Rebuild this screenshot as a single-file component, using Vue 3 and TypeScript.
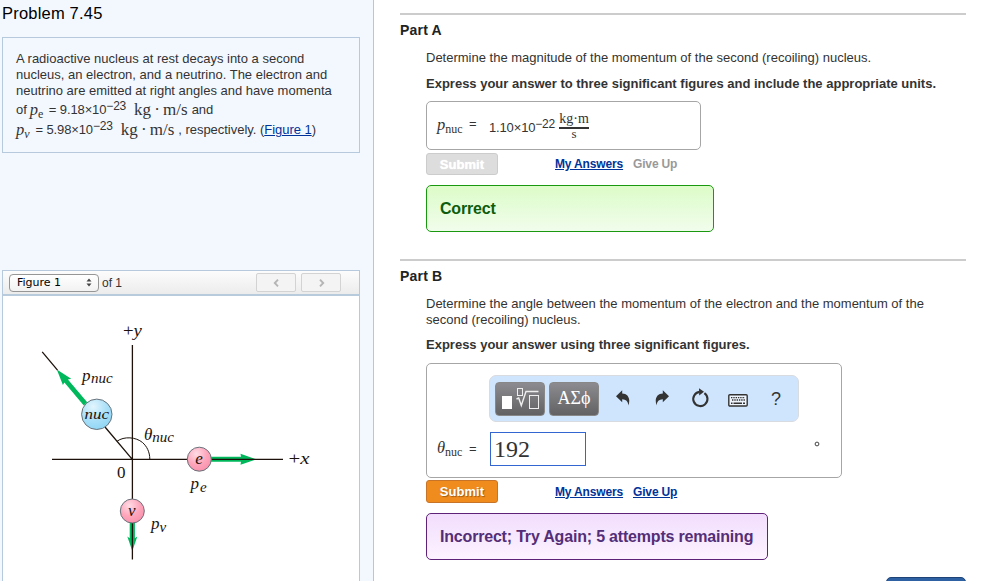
<script setup lang="ts">
import { ref } from 'vue'

const figure = ref('Figure 1')
const answer = ref('192')
</script>

<template>
  <div class="page">
    <aside class="left">
      <h1 class="title">Problem 7.45</h1>
      <section class="problem">
        <div class="line l1">A radioactive nucleus at rest decays into a second</div>
        <div class="line l2">nucleus, an electron, and a neutrino. The electron and</div>
        <div class="line l3">neutrino are emitted at right angles and have momenta</div>
        <div class="line tall">
          <span>of</span>
          <span class="var pe"><i>p</i><sub>e</sub></span>
          <span class="val">= 9.18×10<sup>−23</sup></span>
          <span class="unit">kg · m/s</span>
          <span class="and">and</span>
        </div>
        <div class="line tall">
          <span class="var pv"><i>p</i><sub><i>ν</i></sub></span>
          <span class="val">= 5.98×10<sup>−23</sup></span>
          <span class="unit">kg · m/s</span>
          <span class="resp">, respectively. (<a href="#">Figure 1</a>)</span>
        </div>
      </section>

      <section class="figure">
        <header class="fig-head">
          <button class="select" type="button">
            <span>{{ figure }}</span>
            <svg width="6" height="9" viewBox="0 0 6 9"><path d="M0.5 3.5 3 0.5 5.5 3.5zM0.5 5.5 3 8.5 5.5 5.5z" fill="#444" /></svg>
          </button>
          <span class="of">of 1</span>
          <button class="nav prev" type="button">
            <svg width="7" height="8" viewBox="0 0 7 8"><path d="M5 .7 1.8 4 5 7.3" fill="none" stroke="#b5b5b5" stroke-width="1.9" /></svg>
          </button>
          <button class="nav" type="button">
            <svg width="7" height="8" viewBox="0 0 7 8"><path d="M2 .7 5.2 4 2 7.3" fill="none" stroke="#b5b5b5" stroke-width="1.9" /></svg>
          </button>
        </header>
        <svg class="diagram" width="356" height="286" viewBox="3 296 356 286">
          <defs>
            <radialGradient id="blue" cx=".38" cy=".25" r=".8">
              <stop offset="0" stop-color="#e2f5fd" />
              <stop offset=".55" stop-color="#abe0f8" />
              <stop offset="1" stop-color="#8dd5f5" />
            </radialGradient>
            <radialGradient id="pink" cx=".38" cy=".28" r=".8">
              <stop offset="0" stop-color="#ffdce5" />
              <stop offset=".55" stop-color="#fea5bb" />
              <stop offset="1" stop-color="#f98eaa" />
            </radialGradient>
          </defs>
          <g fill="#00b85c">
            <path d="M211 456.8H241L240.5 453.8 256.5 459.3 240.5 464.8 241 461.8H211z" />
            <path d="M129.7 522H134.9V538.2L137.3 536.4 132.3 551 127.3 536.4 129.7 538.2z" />
            <path d="M56.8 369.4 71.2 378.7 67.9 379.5 87.2 402.3 83.8 405.6 64.4 382.4 62.9 385z" />
          </g>
          <g fill="none" stroke="#1c120b" stroke-width="1.3">
            <path d="M132.4 345V559.5M52 459.3H283M42.2 351.8 57.5 370.2M105 427 132.3 459.3" />
            <path d="M117 441.3C124 436 136 437 142.5 442.5 147 446.5 149.7 452 149.8 459" stroke-width="1" />
          </g>
          <g stroke="#69727a" stroke-width="1">
            <circle cx="96.8" cy="414.3" r="15.2" fill="url(#blue)" />
            <circle cx="199.3" cy="459.2" r="12" fill="url(#pink)" />
            <circle cx="132.3" cy="511" r="12" fill="url(#pink)" />
          </g>
          <g class="dlabels">
            <text x="123" y="336" textLength="19" lengthAdjust="spacingAndGlyphs">+<tspan font-style="italic">y</tspan></text>
            <text x="288.5" y="464" textLength="21" lengthAdjust="spacingAndGlyphs">+<tspan font-style="italic">x</tspan></text>
            <text x="117" y="478">0</text>
            <g font-style="italic">
              <text x="82" y="381">p<tspan class="ds" dx=".5" dy="2">nuc</tspan></text>
              <text x="84.5" y="419" class="ds" textLength="24.5" lengthAdjust="spacingAndGlyphs">nuc</text>
              <text x="144" y="439.5">θ<tspan class="ds" dy="2.5">nuc</tspan></text>
              <text x="195.3" y="463.5" class="md">e</text>
              <text x="128" y="515.5" class="md">ν</text>
              <text x="190.5" y="489">p<tspan class="ds" dx="1" dy="3">e</tspan></text>
              <text x="151" y="529">p<tspan class="ds" dy="3">ν</tspan></text>
            </g>
          </g>
        </svg>
      </section>
    </aside>

    <main class="right">
      <section class="part a">
        <h2>Part A</h2>
        <div class="body">
          <p class="q qa">Determine the magnitude of the momentum of the second (recoiling) nucleus.</p>
          <p class="ins ia">Express your answer to three significant figures and include the appropriate units.</p>
          <div class="box box-a">
            <span class="var nuc"><i>p</i><sub>nuc</sub></span>
            <span class="eq">=</span>
            <span class="num">1.10×10<sup>−22</sup></span>
            <span class="frac"><span>kg·m</span><span class="den">s</span></span>
          </div>
          <div class="actions aa">
            <button class="submit off" type="button">Submit</button>
            <a href="#" class="my">My Answers</a>
            <span class="give">Give Up</span>
          </div>
          <div class="feedback ok">Correct</div>
        </div>
      </section>

      <section class="part b">
        <h2>Part B</h2>
        <div class="body">
          <p class="q qb"><span class="b1">Determine the angle between the momentum of the electron and the momentum of the</span><br><span>second (recoiling) nucleus.</span></p>
          <p class="ins ib">Express your answer using three significant figures.</p>
          <div class="box box-b">
            <div class="toolbar">
              <button class="tool" type="button">
                <svg width="38" height="24" viewBox="0 0 38 24">
                  <rect x="1" y="9" width="10" height="13" fill="#fff" />
                  <g fill="none" stroke="#eee" stroke-width="1">
                    <rect x="16.5" y="1.5" width="5" height="7" />
                    <path d="M15.5 12 17.7 11 20.3 18.5 25 4.5H37.5" stroke-width="1.4" />
                    <rect x="28.5" y="8.5" width="9" height="13" />
                  </g>
                </svg>
              </button>
              <button class="tool greek" type="button">ΑΣϕ</button>
              <svg class="ic undo" width="14" height="16" viewBox="0 0 14 16"><path d="M0 6.2 6.2.3V3.4C12 3.6 14.8 8.5 12.4 15.6 12 11 10 9.4 6.2 9.2V12.2z" fill="#333" /></svg>
              <svg class="ic redo" width="14" height="16" viewBox="0 0 14 16"><path d="M14 6.2 7.8.3V3.4C2 3.6-.8 8.5 1.6 15.6 2 11 4 9.4 7.8 9.2V12.2z" fill="#333" /></svg>
              <svg class="ic reset" width="18" height="20" viewBox="0 0 18 20">
                <path d="M13.4 5.1A7.1 7.1 0 1 1 8.5 3.9" fill="none" stroke="#333" stroke-width="2.1" />
                <path d="M8 .2 13 3.8 8.2 7.5z" fill="#333" />
              </svg>
              <svg class="ic keys" width="20" height="13" viewBox="0 0 20 13">
                <rect x=".8" y=".8" width="18.4" height="11.2" rx="1" fill="#eef5fd" stroke="#333" stroke-width="1.4" />
                <path d="M3 3.6H17M4 6H17" stroke="#333" stroke-width="1.4" stroke-dasharray="1.4 .9" />
                <path d="M3 9.2H4.5M5.5 9.2H14M15 9.2H17" stroke="#333" stroke-width="1.4" />
              </svg>
              <span class="help">?</span>
            </div>
            <div class="entry">
              <span class="var theta"><i>θ</i><sub>nuc</sub></span>
              <span class="eq">=</span>
              <input v-model="answer" type="text">
              <span class="deg"><svg width="6" height="6" viewBox="0 0 6 6"><circle cx="3" cy="3" r="1.9" fill="none" stroke="#444" /></svg></span>
            </div>
          </div>
          <div class="actions ab">
            <button class="submit" type="button">Submit</button>
            <a href="#" class="my">My Answers</a>
            <a href="#" class="give">Give Up</a>
          </div>
          <div class="feedback bad">Incorrect; Try Again; 5 attempts remaining</div>
        </div>
      </section>
      <button class="continue" type="button" aria-label="Continue"></button>
    </main>
  </div>
</template>

<style>
body { margin: 0; overflow: hidden; background: #fff; }
</style>

<style scoped>
* { box-sizing: border-box; }
.page { display: flex; width: 998px; height: 581px; overflow: hidden; font-family: "Liberation Sans", Arial, sans-serif; font-size: 13px; color: #333; white-space: nowrap; }
h1, h2, p { margin: 0; }
button { padding: 0; font-family: inherit; }
svg { display: block; flex: none; }
a { color: #039; }
.left { width: 374px; height: 581px; flex: none; background: #f3f8ff; border-right: 1px solid #b3c7dd; padding: 0 0 0 2px; display: flex; flex-direction: column; }
.title { font-size: 16.5px; font-weight: 400; line-height: 27px; height: 37px; color: #000; letter-spacing: .2px; }
.problem { width: 358px; height: 116px; border: 1px solid #b7c9dc; padding: 13px; }
.line { height: 16px; line-height: 16px; }
.tall { height: 20px; line-height: 22px; display: flex; }
sup { font-size: 12px; line-height: 0; vertical-align: 4px; }
.var { font-family: "Liberation Serif", serif; font-size: 16.5px; }
.var sub { font-size: 12px; line-height: 0; vertical-align: -3px; }
.pe { width: 18px; margin-left: 3px; }
.pv { width: 19.5px; }
.pe + .val { margin-left: 1px; }
.val { letter-spacing: -.12px; }
.val sup { letter-spacing: -.2px; }
.unit { font-family: "Liberation Serif", serif; font-size: 17px; margin-left: 8px; word-spacing: -1.1px; }
.and { margin-left: 4px; }
.resp { margin-left: 4px; letter-spacing: -.03px; }

.figure { width: 358px; margin-top: 117px; border: 1px solid #b7c9dc; border-bottom: 0; background: #fff; height: 311px; overflow: hidden; }
.fig-head { height: 25px; border-bottom: 2px solid #b7cbdd; background: linear-gradient(#fcfcfc, #ececec); display: flex; align-items: center; padding-left: 6px; }
.select { width: 90px; height: 18px; border: 1px solid #969696; border-radius: 4px; background: linear-gradient(#fff, #f2f2f2); display: flex; align-items: center; justify-content: space-between; padding: 0 6px 0 7px; font-family: "DejaVu Sans", sans-serif; font-size: 11px; color: #000; }
.of { margin-left: 3px; font-size: 12px; }
.nav { width: 40px; height: 19px; border: 1px solid #d3d3d3; border-radius: 2px; background: #f4f4f4; display: flex; align-items: center; justify-content: center; margin-left: 5px; }
.prev { margin-left: auto; }
.nav:last-child { margin-right: 18px; }
.dlabels { font-family: "Liberation Serif", serif; font-size: 17px; fill: #1c120b; }
.ds { font-size: 15px; }
.md { font-size: 17px; }

.right { width: 624px; padding: 13px 32px 0 26px; display: flex; flex-direction: column; }
.part { border-top: 2px solid #ccc; flex: none; }
.part.a { height: 246px; }
.part.b { height: 318px; }
h2 { font-size: 14px; line-height: 30px; height: 30px; color: #222; letter-spacing: .2px; }
.body { padding-left: 26px; }
.q { line-height: 16px; padding-top: 5px; }
.ins { line-height: 16px; font-weight: 700; }
.ia { margin-top: 10px; }
.ib { margin-top: 9px; }
.box { border: 1px solid #a6a6a6; border-radius: 5px; }
.box-a { width: 275px; height: 49px; margin-top: 9px; padding-left: 10px; display: flex; align-items: center; }
.box-a .var { width: 32px; }
.nuc { margin-top: -2px; }
.box .var sub { font-size: 12px; }
.box-a .eq { margin-top: -4px; width: 20px; }
.num { width: 70px; margin-top: 4px; letter-spacing: -.15px; }
.num sup { letter-spacing: -.3px; }
.frac { font-family: "Liberation Serif", serif; font-size: 14px; display: flex; flex-direction: column; align-items: center; width: 30px; line-height: 16px; margin-top: -3px; }
.den { border-top: 2px solid #333; width: 30px; text-align: center; line-height: 9px; font-size: 13px; }
.actions { display: flex; align-items: center; height: 22px; margin-top: 3px; font-size: 12px; letter-spacing: -.15px; font-weight: 700; }
.submit { width: 72px; height: 22px; border: 1px solid #c87428; border-radius: 3px; background: #f08c1e; color: #fff; font-weight: 700; font-size: 13px; text-shadow: 1px 1px 1px #a55b10; letter-spacing: .05px; }
.submit.off { background: #ddd; border-color: #ccc; text-shadow: 0 0 1px #fff; }
.my { margin-left: 57px; width: 68px; }
.give { margin-left: 10px; color: #999; }
a.give { color: #039; }
.ab { margin-top: 2px; height: 23px; }
.ab .submit { height: 23px; }
.feedback { height: 47px; border: 1px solid; border-radius: 5px; margin-top: 10px; padding-left: 13px; line-height: 45px; font-size: 16px; letter-spacing: -.19px; font-weight: 700; }
.ok { width: 288px; border-color: #1a9910; background: linear-gradient(#dcfcc8, #f1fdec); color: #0d5c0d; }
.bad { width: 342px; border-color: #5e2378; background: linear-gradient(#f2ddfd, #fdf3ff); color: #542e76; }
.box-b { width: 416px; height: 115px; margin-top: 10px; padding: 11px 0 0 10px; }
.toolbar { margin-left: 52px; width: 310px; height: 47px; border: 1px solid #d8dbe0; border-radius: 7px; background: #cfe5fe; display: flex; align-items: center; padding-left: 5px; }
.tool { width: 50px; height: 34px; margin-right: 4px; border: 1px solid #888; border-radius: 4px; background: linear-gradient(#8c8c90, #626264); display: flex; align-items: center; justify-content: center; color: #fff; }
.greek { font-family: "Liberation Serif", serif; font-size: 18px; }
.undo { margin: -2px 0 0 13px; }
.redo { margin: -2px 0 0 25px; }
.reset { margin: -2px 0 0 22px; }
.keys { margin: 3px 0 0 19px; }
.help { margin-left: 23px; font-size: 18px; line-height: 20px; }
.entry { display: flex; align-items: center; height: 34px; margin-top: 10px; }
.theta { width: 32px; }
.entry .eq { width: 21px; }
.entry .eq, .theta { margin-top: -2px; }
input { width: 96px; height: 34px; border: 1px solid #3366d0; outline: 0; padding: 0 4px 0 3px; font: 24px "Liberation Serif", serif; color: #333; background: #fff; }
.deg { margin: -10px 0 0 228px; }
.continue { width: 80px; height: 30px; margin: 0 0 0 auto; border: 1px solid #1d4377; border-radius: 5px; background: #2d61a3; flex: none; }
</style>
